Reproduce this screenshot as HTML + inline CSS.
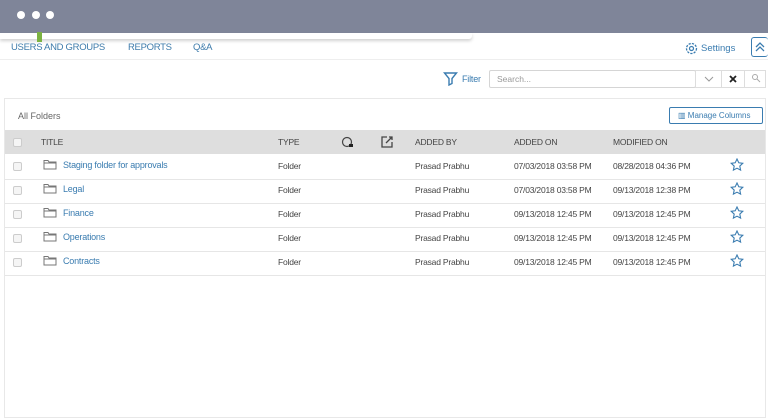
<!DOCTYPE html>
<html><head><meta charset="utf-8"><style>
*{margin:0;padding:0;box-sizing:border-box}
body{width:768px;height:414px;overflow:hidden;background:#fff;font-family:"Liberation Sans",sans-serif;position:relative;color:#444}
.a{position:absolute;white-space:nowrap}
.top{left:0;top:0;width:768px;height:33px;background:#7f8599}
.dot{width:8px;height:8px;border-radius:50%;background:#fff;top:11px}
.nav{font-size:9.5px;color:#3d7bab;top:42px;letter-spacing:-0.3px}
.hd{font-size:8.5px;color:#444;top:137px;letter-spacing:-0.2px}
.cell{font-size:8.5px;color:#444;letter-spacing:-0.2px}
.lnk{font-size:9px;color:#3a7cb0;letter-spacing:-0.2px}
.cb{width:9px;height:9px;border:1px solid #ccc;border-radius:2px;background:#f5f5f5}
.row{left:5px;width:760px;height:1px;background:#e6e6e6}
</style></head><body>
<div class="a top"></div>
<div class="a dot" style="left:17px"></div>
<div class="a dot" style="left:32px"></div>
<div class="a dot" style="left:46px"></div>
<div class="a" style="left:0;top:33px;width:472px;height:6px;background:#fff;box-shadow:0 2px 3px rgba(0,0,0,.18);border-radius:0 0 3px 0"></div>
<div class="a" style="left:37px;top:32px;width:5px;height:10px;background:#7cb342"></div>
<div class="a nav" style="left:11px">USERS AND GROUPS</div>
<div class="a nav" style="left:128px">REPORTS</div>
<div class="a nav" style="left:193px">Q&amp;A</div>
<div class="a" style="left:0;top:59px;width:768px;height:1px;background:#eee"></div>
<svg class="a" style="left:684px;top:41px" width="15" height="15" viewBox="0 0 15 15"><circle cx="7.5" cy="7.5" r="5" fill="none" stroke="#3a7cb0" stroke-width="1.3" stroke-dasharray="2.2 1.2"/><circle cx="7.5" cy="7.5" r="2" fill="none" stroke="#3a7cb0" stroke-width="1.2"/></svg>
<div class="a nav" style="left:701px;top:43px;color:#3a7cb0;letter-spacing:0">Settings</div>
<div class="a" style="left:751px;top:37px;width:17px;height:20px;border:1px solid #3a7cb0;border-radius:3px;border-right:none"></div>
<svg class="a" style="left:754px;top:40px" width="12" height="14"><path d="M2 7l4-4 4 4M2 11l4-4 4 4" fill="none" stroke="#3a7cb0" stroke-width="1.3"/></svg>
<svg class="a" style="left:443px;top:71px" width="15" height="15" viewBox="0 0 15 15"><path d="M1.5 2h12l-4.5 5.5v5l-3 1.5v-6.5z" fill="none" stroke="#3a7cb0" stroke-width="1.4"/></svg>
<div class="a lnk" style="left:462px;top:74px">Filter</div>
<div class="a" style="left:489px;top:70px;width:207px;height:18px;border:1px solid #d5d5d5;border-radius:2px"></div>
<div class="a" style="left:497px;top:74px;font-size:8.5px;color:#999">Search...</div>
<div class="a" style="left:695px;top:70px;width:71px;height:18px;border:1px solid #ddd"></div>
<div class="a" style="left:721px;top:70px;width:1px;height:18px;background:#ddd"></div>
<div class="a" style="left:744px;top:70px;width:1px;height:18px;background:#ddd"></div>
<svg class="a" style="left:703px;top:74px" width="12" height="10"><path d="M2 3l4 4 4-4" fill="none" stroke="#999" stroke-width="1"/></svg>
<svg class="a" style="left:728px;top:74px" width="10" height="10"><path d="M2 2l6 6M8 2l-6 6" stroke="#222" stroke-width="1.8"/></svg>
<svg class="a" style="left:751px;top:73px" width="10" height="10"><circle cx="4" cy="4" r="2.5" fill="none" stroke="#aaa"/><path d="M6 6l3 3" stroke="#aaa"/></svg>
<div class="a" style="left:4px;top:98px;width:762px;height:320px;border:1px solid #e8e8e8"></div>
<div class="a" style="left:18px;top:111px;font-size:9px;color:#666">All Folders</div>
<div class="a" style="left:669px;top:107px;width:94px;height:17px;border:1px solid #3a7cb0;border-radius:2px;font-size:8px;color:#3a7cb0;padding:3px 0 0 8px">▥ Manage Columns</div>
<div class="a" style="left:5px;top:130px;width:760px;height:24px;background:#dedede"></div>
<div class="a cb" style="left:13px;top:138px"></div>
<div class="a hd" style="left:41px">TITLE</div>
<div class="a hd" style="left:278px">TYPE</div>
<svg class="a" style="left:341px;top:135px" width="14" height="14"><circle cx="6" cy="7" r="4.5" fill="none" stroke="#444" stroke-width="1.2"/><rect x="8" y="9" width="4" height="3" fill="#222"/></svg>
<svg class="a" style="left:380px;top:135px" width="14" height="14"><path d="M7 2H2v10h10V7" fill="none" stroke="#444" stroke-width="1.3"/><path d="M6 8l6-6M9 2h3v3" fill="none" stroke="#444" stroke-width="1.3"/></svg>
<div class="a hd" style="left:415px">ADDED BY</div>
<div class="a hd" style="left:514px">ADDED ON</div>
<div class="a hd" style="left:613px">MODIFIED ON</div>

<!-- rows -->
<div class="a row" style="top:179px"></div>
<div class="a row" style="top:203px"></div>
<div class="a row" style="top:227px"></div>
<div class="a row" style="top:251px"></div>
<div class="a row" style="top:275px"></div>

<div class="a cb" style="left:13px;top:162px"></div>
<div class="a cb" style="left:13px;top:186px"></div>
<div class="a cb" style="left:13px;top:210px"></div>
<div class="a cb" style="left:13px;top:234px"></div>
<div class="a cb" style="left:13px;top:258px"></div>

<svg class="a" style="left:43px;top:159px" width="14" height="11"><path d="M1 1.5h4l1 1.5h7v7H1z M1 4h12" fill="none" stroke="#777" stroke-width="1"/></svg>
<svg class="a" style="left:43px;top:183px" width="14" height="11"><path d="M1 1.5h4l1 1.5h7v7H1z M1 4h12" fill="none" stroke="#777" stroke-width="1"/></svg>
<svg class="a" style="left:43px;top:207px" width="14" height="11"><path d="M1 1.5h4l1 1.5h7v7H1z M1 4h12" fill="none" stroke="#777" stroke-width="1"/></svg>
<svg class="a" style="left:43px;top:231px" width="14" height="11"><path d="M1 1.5h4l1 1.5h7v7H1z M1 4h12" fill="none" stroke="#777" stroke-width="1"/></svg>
<svg class="a" style="left:43px;top:255px" width="14" height="11"><path d="M1 1.5h4l1 1.5h7v7H1z M1 4h12" fill="none" stroke="#777" stroke-width="1"/></svg>

<div class="a lnk" style="left:63px;top:160px">Staging folder for approvals</div>
<div class="a lnk" style="left:63px;top:184px">Legal</div>
<div class="a lnk" style="left:63px;top:208px">Finance</div>
<div class="a lnk" style="left:63px;top:232px">Operations</div>
<div class="a lnk" style="left:63px;top:256px">Contracts</div>

<div class="a cell" style="left:278px;top:161px">Folder</div>
<div class="a cell" style="left:278px;top:185px">Folder</div>
<div class="a cell" style="left:278px;top:209px">Folder</div>
<div class="a cell" style="left:278px;top:233px">Folder</div>
<div class="a cell" style="left:278px;top:257px">Folder</div>

<div class="a cell" style="left:415px;top:161px">Prasad Prabhu</div>
<div class="a cell" style="left:415px;top:185px">Prasad Prabhu</div>
<div class="a cell" style="left:415px;top:209px">Prasad Prabhu</div>
<div class="a cell" style="left:415px;top:233px">Prasad Prabhu</div>
<div class="a cell" style="left:415px;top:257px">Prasad Prabhu</div>

<div class="a cell" style="left:514px;top:161px">07/03/2018 03:58 PM</div>
<div class="a cell" style="left:514px;top:185px">07/03/2018 03:58 PM</div>
<div class="a cell" style="left:514px;top:209px">09/13/2018 12:45 PM</div>
<div class="a cell" style="left:514px;top:233px">09/13/2018 12:45 PM</div>
<div class="a cell" style="left:514px;top:257px">09/13/2018 12:45 PM</div>

<div class="a cell" style="left:613px;top:161px">08/28/2018 04:36 PM</div>
<div class="a cell" style="left:613px;top:185px">09/13/2018 12:38 PM</div>
<div class="a cell" style="left:613px;top:209px">09/13/2018 12:45 PM</div>
<div class="a cell" style="left:613px;top:233px">09/13/2018 12:45 PM</div>
<div class="a cell" style="left:613px;top:257px">09/13/2018 12:45 PM</div>

<svg class="a" style="left:730px;top:158px" width="14" height="14" viewBox="0 0 14 14"><path d="M7 1l1.8 3.8 4 .5-3 2.8.8 4L7 10.2 3.4 12.1l.8-4-3-2.8 4-.5z" fill="none" stroke="#3a7cb0" stroke-width="1.1"/></svg>
<svg class="a" style="left:730px;top:182px" width="14" height="14" viewBox="0 0 14 14"><path d="M7 1l1.8 3.8 4 .5-3 2.8.8 4L7 10.2 3.4 12.1l.8-4-3-2.8 4-.5z" fill="none" stroke="#3a7cb0" stroke-width="1.1"/></svg>
<svg class="a" style="left:730px;top:206px" width="14" height="14" viewBox="0 0 14 14"><path d="M7 1l1.8 3.8 4 .5-3 2.8.8 4L7 10.2 3.4 12.1l.8-4-3-2.8 4-.5z" fill="none" stroke="#3a7cb0" stroke-width="1.1"/></svg>
<svg class="a" style="left:730px;top:230px" width="14" height="14" viewBox="0 0 14 14"><path d="M7 1l1.8 3.8 4 .5-3 2.8.8 4L7 10.2 3.4 12.1l.8-4-3-2.8 4-.5z" fill="none" stroke="#3a7cb0" stroke-width="1.1"/></svg>
<svg class="a" style="left:730px;top:254px" width="14" height="14" viewBox="0 0 14 14"><path d="M7 1l1.8 3.8 4 .5-3 2.8.8 4L7 10.2 3.4 12.1l.8-4-3-2.8 4-.5z" fill="none" stroke="#3a7cb0" stroke-width="1.1"/></svg>
</body></html>
